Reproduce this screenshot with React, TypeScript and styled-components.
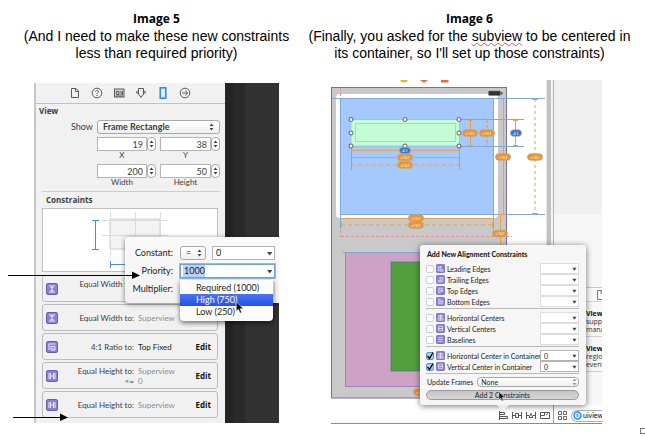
import React from "react";
import styled, { createGlobalStyle, css } from "styled-components";

const ui = `Lato, "Open Sans", "Noto Sans", sans-serif`;

const GlobalStyle = createGlobalStyle`
  *, *::before, *::after { box-sizing: border-box; }
  body { margin: 0; background: #fff; color: #000; font-family: "Liberation Sans", Arial, sans-serif; }
  button, input, select { font: inherit; color: inherit; margin: 0; padding: 0; }
  h2, p, ul, figure { margin: 0; padding: 0; }
`;

/* ---------- document page ---------- */

const Page = styled.main`
  position: relative;
  display: grid;
  grid-template-columns: minmax(0, 6fr) minmax(0, 7fr);
  min-height: 100vh;
  padding: 10px 7px 0 12px;
  overflow: hidden;
`;

const Column = styled.section`
  display: flex;
  flex-direction: column;
`;

const Title = styled.h2`
  font: 700 12px/18px "Open Sans", "Noto Sans", sans-serif;
  text-align: center;
`;

const Caption = styled.p`
  font-size: 14px;
  line-height: 17px;
  text-align: center;
`;

const Misspelt = styled.span`
  text-decoration: underline wavy #f04a4a 1px;
  text-underline-offset: 1px;
  text-decoration-skip-ink: none;
`;

const Shot = styled.figure<{ $top: number; $left: number; $right: number }>`
  position: relative;
  margin: ${(p) => `${p.$top}px ${p.$right}px 0 ${p.$left}px`};
`;

const EndMark = styled.span`
  position: absolute;
  right: -1px;
  bottom: 3px;
  width: 6px;
  height: 6px;
  border: 1px solid #777;
`;

const Pointer = styled.svg<{ $x: number; $y: number }>`
  position: absolute;
  left: ${(p) => p.$x}px;
  top: ${(p) => p.$y}px;
`;

/* ---------- shared controls ---------- */

const Overlap = styled.span`
  display: grid;
  align-items: center;
  & > * { grid-area: 1 / 1; }
  & > svg { justify-self: end; pointer-events: none; }
`;

const TextBox = styled.input<{ $h: number; $focused?: boolean; $faint?: boolean; $right?: boolean }>`
  width: 100%;
  min-width: 0;
  height: ${(p) => p.$h}px;
  padding: 0 3px;
  border: 1px solid ${(p) => (p.$faint ? "#dcdcdc" : "#b4b4b4")};
  border-radius: 0;
  background: #fff;
  outline: none;
  text-align: ${(p) => (p.$right ? "right" : "left")};
  ${(p) =>
    p.$focused &&
    css`
      border-color: #6fa3dc;
      box-shadow: 0 0 0 1px #8fbbec;
      background: linear-gradient(90deg, #fff 2px, #b3d3fb 2px, #b3d3fb 24px, #fff 24px);
    `}
`;

const Popup = styled.select<{ $h: number; $pad: number; $radius: number; $bold?: boolean }>`
  width: 100%;
  height: ${(p) => p.$h}px;
  padding: 0 ${(p) => p.$pad}px;
  appearance: none;
  border: 1px solid #a8a8a8;
  border-radius: ${(p) => p.$radius}px;
  background: linear-gradient(#fff, #f0f0f0);
  outline: none;
  font-weight: ${(p) => (p.$bold ? 700 : 400)};
  line-height: ${(p) => p.$h - 2}px;
`;

const Down = ({ size = 5 }: { size?: number }) => (
  <svg width={size + 3} height={size} viewBox="0 0 8 5">
    <path d="M0 1h5.4L2.7 4.6z" fill="#444" />
  </svg>
);

const UpDown = ({ inset = 6, color = "#444" }: { inset?: number; color?: string }) => (
  <svg width={5 + inset} height="8" viewBox={`0 0 ${5 + inset} 8`}>
    <path d="M0.5 3.1h4L2.5 0.6zM0.5 4.9h4L2.5 7.4z" fill={color} />
  </svg>
);

/* ---------- size inspector ---------- */

const Window = styled.div`
  display: flex;
  height: 340px;
  overflow: hidden;
`;

const Inspector = styled.div`
  flex: 1;
  min-width: 0;
  border-left: 2px solid #c6c6c6;
  background: #f1f1f1;
  font: 8px/10px ${ui};
  color: #3c3c3c;
`;

const Backdrop = styled.div`
  width: 54px;
  background: linear-gradient(90deg, #242424 0 8px, #2a2a2a 8px 20px, #323232 20px);
`;

const Tabs = styled.nav`
  display: flex;
  justify-content: center;
  gap: 8px;
  height: 21px;
  border-bottom: 1px solid #c2c2c2;
`;

const Tab = styled.button`
  display: grid;
  place-items: center;
  width: 14px;
  border: 0;
  background: none;
`;

const Body = styled.div`
  display: flex;
  flex-direction: column;
  padding: 0 7px 0 6px;
`;

const SectionName = styled.h2<{ $inset: number; $h: number }>`
  margin-left: ${(p) => p.$inset}px;
  font: 700 8px/${(p) => p.$h}px "Open Sans", "Noto Sans", sans-serif;
`;

const Geometry = styled.div`
  display: grid;
  grid-template-columns: 51px 59px 60px;
  justify-content: end;
  column-gap: 4px;
  margin: 3px -2px 0 0;
  border-bottom: 1px solid #cdcdcd;
  & > label { text-align: right; line-height: 14px; font-size: 9px; }
`;

const ShowField = styled.div`
  grid-column: 2 / 4;
  margin-bottom: 3px;
  font-size: 9px;
`;

const NumberField = styled.div<{ $start?: boolean }>`
  grid-column-start: ${(p) => (p.$start ? 2 : "auto")};
  display: grid;
  grid-template-columns: 1fr 9px;
  grid-template-rows: 14px 9px;
  font-size: 9px;
  height: 27px;
  & > label { font-size: 8px; line-height: 9px; text-align: center; }
`;

const Stepper = styled.button`
  display: grid;
  place-items: center;
  height: 14px;
  padding: 0;
  border: 1px solid #a8a8a8;
  border-radius: 4px;
  background: #fff;
`;

const Preview = styled.svg`
  width: 100%;
  height: 64px;
  border: 1px solid #c0c0c0;
  background: #fff;
`;

const Cards = styled.ul`
  display: grid;
  gap: 2px;
  margin-top: 3px;
  list-style: none;
`;

const Card = styled.li`
  display: grid;
  grid-template-columns: 12px 72px 1fr auto;
  column-gap: 4px;
  align-items: center;
  height: 27px;
  padding: 0 6px 0 3px;
  border: 1px solid #bcbcbc;
  border-radius: 3px;
  white-space: nowrap;
`;

const CardLabel = styled.span`
  text-align: right;
`;

const CardValue = styled.span<{ $strong?: boolean }>`
  color: ${(p) => (p.$strong ? "#222" : "#8d8d8d")};
`;

const Edit = styled.button`
  border: 0;
  background: none;
  color: #111;
  font-family: "Open Sans", "Noto Sans", sans-serif;
  font-weight: 700;
`;

const Glyph = ({ kind, size = 12 }: { kind: string; size?: number }) => {
  const paths: Record<string, string> = {
    width: "M3 3h6M3 9h6M4.5 4.5h3M4.5 7.5h3M6 3v6",
    height: "M3 3v6M9 3v6M4.5 3v6M7.5 3v6M4.5 6h3",
    ratio: "M3 9V3h6.5M5 9V5.5h4V9zM7 7v2",
    leading: "M3 2.5v7M5 3.5h2v2H5zM5 7.5h4v2H5z",
    trailing: "M9 2.5v7M5 3.5h2v2H5zM3 7.5h4v2H3z",
    top: "M2.5 3h7M3.5 5h2v4h-2zM7 5h2v2H7z",
    bottom: "M2.5 9h7M3.5 3h2v4h-2zM7 5h2v2H7z",
    hcenter: "M6 2v8M3.5 3.5h5v2h-5zM2.5 7.5h7v2h-7z",
    vcenter: "M2.5 6h7M3.5 3h5v6h-5z",
    base: "M3 3.5h6M3 6h6M3 8.5h6",
  };
  return (
    <svg width={size} height={size} viewBox="0 0 12 12">
      <rect x="0.5" y="0.5" width="11" height="11" rx="1.5" fill="#8a81cf" stroke="#675db5" />
      <path d={paths[kind]} fill="none" stroke="#e9e6ff" strokeWidth="1" />
    </svg>
  );
};

const TabIcon = ({ kind }: { kind: string }) => (
  <svg width="12" height="12" viewBox="0 0 12 12" fill="none" stroke="#5a5a5a" strokeWidth="1">
    {kind === "file" && <path d="M2.5 1.5h4.5L9.5 4v6.5h-7zM6.5 1.5V4.5h3" />}
    {kind === "help" && (
      <>
        <circle cx="6" cy="6" r="4.8" />
        <path d="M4.5 4.9c0-2 3-2 3 0 0 1-1.5 1-1.5 2M6 8v1" />
      </>
    )}
    {kind === "identity" && (
      <>
        <rect x="1.5" y="2" width="9.5" height="8" fill="#d4d4d4" />
        <path d="M3.5 4.5h2.5v3H3.5zM8 4v4M9.5 4v4M3 9h7" />
      </>
    )}
    {kind === "attributes" && (
      <path d="M3.5 1.5h5v6H8L6 10.5 4 7.5h-.5zM3.5 3.5L1 5.5l2.5 1M8.5 3.5L11 5.5l-2.5 1" />
    )}
    {kind === "size" && (
      <>
        <rect x="3.2" y="0.8" width="5.6" height="10.4" fill="#dcebff" stroke="#2687ff" strokeWidth="1.5" />
        <path d="M5 3.5h2M5 5.5h2M5 7.5h2" stroke="#fff" />
      </>
    )}
    {kind === "connections" && (
      <>
        <circle cx="6" cy="6" r="4.8" />
        <path d="M3 6h5.5M6.3 3.7L8.7 6 6.3 8.3" />
      </>
    )}
  </svg>
);

const Coordinate = ({ name, value, start }: { name: string; value: string; start?: boolean }) => (
  <NumberField $start={start}>
    <TextBox id={name} $h={14} $right defaultValue={value} />
    <Stepper aria-label={`Step ${name}`}>
      <UpDown inset={0} />
    </Stepper>
    <label htmlFor={name}>{name}</label>
  </NumberField>
);

/* ---------- constraint editor ---------- */

const Editor = styled.form`
  position: absolute;
  top: 154px;
  left: 91px;
  right: 0;
  display: grid;
  grid-template-columns: 48px 1fr;
  grid-auto-rows: 14px;
  gap: 4px 7px;
  height: 66px;
  padding: 9px 4px 0 0;
  border-radius: 4px 0 0 4px;
  background: linear-gradient(#fafafa, #f1f1f1);
  box-shadow: 0 1px 5px rgba(0, 0, 0, 0.5);
  clip-path: inset(-8px 0 -40px -8px);
  font: 9px/14px ${ui};
  color: #222;
  & > label { text-align: right; }
`;

const Pair = styled.div`
  display: grid;
  grid-template-columns: 26px 1fr;
  gap: 6px;
`;

const Menu = styled.ul`
  position: absolute;
  top: 43px;
  left: 55px;
  right: 6px;
  padding: 2px 0 3px;
  border-radius: 0 0 4px 4px;
  background: #fdfdfd;
  box-shadow: 0 2px 5px rgba(0, 0, 0, 0.55);
  list-style: none;
`;

const MenuItem = styled.li<{ $on?: boolean }>`
  padding-left: 16px;
  line-height: 12px;
  white-space: nowrap;
  color: ${(p) => (p.$on ? "#fff" : "#222")};
  background: ${(p) => (p.$on ? "linear-gradient(#4a74f2, #2450e8)" : "none")};
`;

const Cursor = ({ x, y, w }: { x: number; y: number; w: number }) => (
  <Pointer $x={x} $y={y} width={w} height={w + 4} viewBox="0 0 8 12">
    <path d="M1 0.5v9l2-1.8 1.5 3.5 1.5-.7L4.6 7.2h2.9z" fill="#111" stroke="#fff" strokeWidth="0.5" />
  </Pointer>
);

const Arrow = ({ x, y, length }: { x: number; y: number; length: number }) => (
  <Pointer $x={x} $y={y} width={length} height="8" viewBox={`0 0 ${length} 8`}>
    <path d={`M0 4.5H${length - 7}`} stroke="#000" />
    <path d={`M${length - 8} 0.5L${length} 4.5L${length - 8} 8z`} fill="#000" />
  </Pointer>
);

const InspectorShot = () => (
  <Shot $top={21} $left={22} $right={22}>
    <Window>
      <Inspector>
        <Tabs>
          {["file", "help", "identity", "attributes", "size", "connections"].map((k) => (
            <Tab key={k} aria-label={k}>
              <TabIcon kind={k} />
            </Tab>
          ))}
        </Tabs>
        <Body>
          <SectionName $inset={-3} $h={13}>View</SectionName>
          <Geometry>
            <label htmlFor="show">Show</label>
            <ShowField>
              <Overlap>
                <Popup id="show" $h={14} $pad={5} $radius={3} $bold>
                  <option>Frame Rectangle</option>
                </Popup>
                <UpDown />
              </Overlap>
            </ShowField>
            <Coordinate name="X" value="19" start />
            <Coordinate name="Y" value="38" />
            <Coordinate name="Width" value="200" start />
            <Coordinate name="Height" value="50" />
          </Geometry>
          <SectionName $inset={4} $h={16}>Constraints</SectionName>
          <Preview>
            <path d="M67 10h50v30H67z" fill="#f3f3f3" stroke="#cfcfcf" />
            <path d="M67.5 3v44M92.5 3v30M117.5 3v30M59 11.5h66M59 26.5h66" stroke="#dcdcdc" fill="none" />
            <path d="M52.5 11v29M49 11.5h7M49 40.5h7M67.5 52v7M67 55.5h20" stroke="#3d8ff0" fill="none" />
          </Preview>
          <Cards>
            <Card>
              <Glyph kind="width" />
              <CardLabel>Equal Width to:<br />&nbsp;</CardLabel>
            </Card>
            <Card>
              <Glyph kind="width" />
              <CardLabel>Equal Width to:</CardLabel>
              <CardValue>Superview</CardValue>
            </Card>
            <Card>
              <Glyph kind="ratio" />
              <CardLabel>4:1 Ratio to:</CardLabel>
              <CardValue $strong>Top Fixed</CardValue>
              <Edit>Edit</Edit>
            </Card>
            <Card>
              <Glyph kind="height" />
              <CardLabel>Equal Height to:<br />&lt;=</CardLabel>
              <CardValue>Superview<br />0</CardValue>
              <Edit>Edit</Edit>
            </Card>
            <Card>
              <Glyph kind="height" />
              <CardLabel>Equal Height to:</CardLabel>
              <CardValue>Superview</CardValue>
              <Edit>Edit</Edit>
            </Card>
          </Cards>
        </Body>
      </Inspector>
      <Backdrop />
    </Window>
    <Editor>
      <label htmlFor="constant">Constant:</label>
      <Pair>
        <Overlap>
          <Popup aria-label="Relation" $h={14} $pad={5} $radius={3}>
            <option>=</option>
          </Popup>
          <UpDown inset={4} />
        </Overlap>
        <Overlap>
          <TextBox id="constant" $h={14} defaultValue="0" />
          <Down />
        </Overlap>
      </Pair>
      <label htmlFor="priority">Priority:</label>
      <Overlap>
        <TextBox id="priority" $h={14} $focused defaultValue="1000" />
        <Down />
      </Overlap>
      <label htmlFor="multiplier">Multiplier:</label>
      <TextBox id="multiplier" $h={14} $faint />
      <Menu role="listbox" aria-label="Priority">
        <MenuItem role="option">Required (1000)</MenuItem>
        <MenuItem role="option" $on aria-selected>High (750)</MenuItem>
        <MenuItem role="option">Low (250)</MenuItem>
      </Menu>
    </Editor>
    <Cursor x={201} y={218} w={9} />
    <Arrow x={-26} y={188} length={132} />
    <Arrow x={-21} y={330} length={55} />
  </Shot>
);

/* ---------- storyboard canvas ---------- */

const Storyboard = styled.div`
  overflow: hidden;
`;

const Panes = styled.div`
  display: flex;
  height: 325px;
`;

const CanvasArt = styled.svg`
  flex: none;
`;

const Divider = styled.div`
  width: 8px;
  flex: none;
  background: linear-gradient(90deg, #e4e4e4 0 1px, #c2c2c2 1px 5px, #f4f4f4 5px 7px, #b4b4b4 7px);
`;

const Library = styled.aside`
  flex: 1;
  min-width: 0;
  display: flex;
  flex-direction: column;
  justify-content: flex-end;
  background: linear-gradient(#f0f0f0 134px, #f7f7f7 134px);
  font: 7px/8px "Open Sans", "Noto Sans", sans-serif;
  color: #333;
`;

const LibraryTabs = styled.div`
  display: flex;
  justify-content: flex-end;
  height: 15px;
  overflow: hidden;
  border-top: 1px solid #c8c8c8;
  border-bottom: 1px solid #d4d4d4;
  background: #fafafa;
`;

const LibraryItem = styled.div`
  height: 35px;
  padding: 8px 0 0 32px;
  border-bottom: 1px solid #d0d0d0;
  white-space: nowrap;
  overflow: hidden;
  & > b { color: #111; display: block; }
`;

const LibraryRest = styled.div`
  height: 33px;
`;

const StatusBar = styled.footer`
  display: flex;
  justify-content: flex-end;
  align-items: stretch;
  height: 19px;
  border-bottom: 1px solid #8a8a8a;
`;

const Tools = styled.div`
  display: flex;
  align-items: center;
  gap: 4px;
  padding: 3px 3px 0 0;
`;

const Tool = styled.button`
  display: grid;
  border: 0;
  background: none;
`;

const Filter = styled.div`
  display: flex;
  align-items: center;
  gap: 4px;
  width: 49px;
  padding: 3px 0 0 4px;
  border-left: 1px solid #a0a0a0;
`;

const SearchBox = styled.label`
  display: flex;
  align-items: center;
  gap: 1px;
  flex: 1;
  min-width: 0;
  height: 12px;
  padding-left: 1px;
  border: 1px solid #b0b0b0;
  border-right: 0;
  border-radius: 6px 0 0 6px;
  background: #fff;
  & > svg { flex: none; }
`;

const SearchInput = styled.input`
  width: 100%;
  min-width: 0;
  border: 0;
  background: none;
  outline: none;
  font: 7px/9px ${ui};
`;

const Badge = ({ x, y, blue }: { x: number; y: number; blue?: boolean }) => (
  <g>
    <rect x={x - (blue ? 5.5 : 7.5)} y={y - 3.2} width={blue ? 11 : 15} height="6.5" rx="3.2"
      fill={blue ? "#3b78c8" : "#ee9330"} stroke="#b9a68e" strokeWidth="0.8" />
    <text x={x} y={y + 1.6} textAnchor="middle" fontFamily="Open Sans, sans-serif" fontWeight="600"
      fontSize="4" fill={blue ? "#cfe2ff" : "#ffe3bd"}>{blue ? "4:1" : "=162"}</text>
  </g>
);

const handles = [351, 405, 459].flatMap((x) => [119.5, 133, 146].map((y) => [x, y])).filter(
  ([x, y]) => !(x === 405 && y === 133)
);

const Canvas = () => (
  <CanvasArt width="215" height="325" viewBox="331 80 215 325">
    <rect x="331" y="80" width="215" height="325" fill="#fff" />
    <circle cx="404" cy="78.5" r="4" fill="#e5b822" />
    <path d="M420 80h8l-4 3z" fill="#ee6a4a" />
    <rect x="441" y="76" width="7.5" height="6.5" fill="#ef6a3c" />
    <rect x="331.5" y="87.5" width="175" height="310.5" fill="#c9c9c9" stroke="#7b6ca5" />
    <rect x="336" y="94" width="162" height="124" rx="4" fill="#fff" />
    <rect x="341" y="99" width="152" height="115" fill="#a6c9fd" />
    <rect x="488.5" y="91" width="12" height="4.5" rx="1" fill="#333" stroke="#777" strokeWidth="0.5" />
    <rect x="501" y="92" width="1.5" height="2.5" fill="#555" />
    <path d="M340.5 88v10M341 236.500h171M340.5 230v7" fill="none" stroke="#e88f8f" strokeDasharray="3 2" />
    <path d="M332 98.5h213M341 214.5h204M460 119.5h64M460 146.5h64M340.5 99v130M493.5 99v130M351.5 146v24M459.5 146v24"
      fill="none" stroke="#7fa9dc" />
    <rect x="351" y="119.5" width="108.5" height="26.5" fill="#c4fcd6" stroke="#89b6cf" strokeWidth="0.6" />
    <rect x="355.5" y="123.5" width="100" height="18" fill="none" stroke="#c3cbb4" />
    <g fill="none" stroke="#e8a24a">
      <path d="M351 150.5h108M351 157.5h108M470.5 120v26M468 120.5h5M468 145.5h5M515.5 120v26M513 120.5h5M513 145.5h5" />
      <path d="M351 165h108M341 225h152" strokeDasharray="4 3" />
      <path d="M487 120v26" strokeWidth="1.5" strokeDasharray="3 2" />
      <path d="M535 99v115" stroke="#f3c078" strokeWidth="1.5" strokeDasharray="3 3" />
      <path d="M532 99.5h6M532 213.5h6M503.5 99v115L500.5 216v30M341 218.5h152M498 214.5h7M341.5 222v6M492.5 222v6" />
    </g>
    {handles.map(([x, y]) => (
      <rect key={`${x}-${y}`} x={x - 1.8} y={y - 1.8} width="3.6" height="3.6" rx="1" fill="#fff" stroke="#555" />
    ))}
    <Badge x={405} y={150.5} blue />
    <Badge x={405} y={157.5} />
    <Badge x={405} y={165} />
    <Badge x={470} y={133} />
    <Badge x={487} y={133} />
    <Badge x={516} y={133} blue />
    <Badge x={503} y={157} />
    <Badge x={535} y={157} />
    <Badge x={416} y={218} />
    <Badge x={416} y={225} />
    <Badge x={500} y={233.5} />
    <rect x="345.5" y="252.5" width="152" height="134" fill="#cea2c6" stroke="#a27fc0" />
    <path d="M343 252.5h156" stroke="#86a3d2" />
    <rect x="391" y="262" width="62" height="109" fill="#539f3e" stroke="#4a7d8c" strokeWidth="0.8" />
    <Badge x={421} y={392} />
  </CanvasArt>
);

const AlignPopover = styled.form`
  position: absolute;
  top: 165px;
  left: 89px;
  width: 166px;
  padding: 3px 7px 5px 6px;
  border-radius: 3px;
  background: #f6f6f6;
  box-shadow: 0 1px 6px rgba(0, 0, 0, 0.55);
  font: 7px/10px ${ui};
  color: #222;
  &::after {
    content: "";
    position: absolute;
    top: 100%;
    left: 77px;
    border: 6px solid transparent;
    border-top-color: #ececec;
    border-bottom: 0;
  }
`;

const AlignTitle = styled.h2`
  padding-left: 1px;
  font: 900 7px/13px ${ui};
  color: #222;
`;

const AlignGroup = styled.div`
  display: grid;
  grid-auto-rows: 11px;
  padding: 2px 0 1px;
  border-bottom: 1px solid #b9b9b9;
  margin-bottom: 1px;
`;

const AlignRow = styled.div`
  display: grid;
  grid-template-columns: 8px 9px 1fr 39px;
  column-gap: 2px;
  align-items: center;
  white-space: nowrap;
  & > label { min-width: 0; }
`;

const Tick = styled.input`
  appearance: none;
  width: 8px;
  height: 8px;
  border: 1px solid #cfcfcf;
  border-radius: 2px;
  background: #fff;
  &:checked {
    border-color: #5c92cf;
    background: #a9d0f8;
  }
`;

const FramesRow = styled.div`
  display: grid;
  grid-template-columns: auto 1fr;
  column-gap: 4px;
  align-items: center;
  height: 14px;
  padding-left: 1px;
`;

const AddButton = styled.button`
  display: block;
  width: 100%;
  height: 10px;
  margin-top: 1px;
  border: 1px solid #9b9b9b;
  border-radius: 5px;
  background: linear-gradient(#c4c4c4, #d6d6d6);
  line-height: 8px;
`;

const groups: { name: string; kind: string; on?: boolean }[][] = [
  [
    { name: "Leading Edges", kind: "leading" },
    { name: "Trailing Edges", kind: "trailing" },
    { name: "Top Edges", kind: "top" },
    { name: "Bottom Edges", kind: "bottom" },
  ],
  [
    { name: "Horizontal Centers", kind: "hcenter" },
    { name: "Vertical Centers", kind: "vcenter" },
    { name: "Baselines", kind: "base" },
  ],
  [
    { name: "Horizontal Center in Container", kind: "hcenter", on: true },
    { name: "Vertical Center in Container", kind: "vcenter", on: true },
  ],
];

const StoryboardShot = () => (
  <Shot $top={18} $left={30} $right={36}>
    <Storyboard>
      <Panes>
        <Canvas />
        <Divider />
        <Library>
          <LibraryTabs>
            <svg width="6" height="14" viewBox="0 0 6 14">
              <path d="M1.5 2.5h6v9h-6zM5 2.5v3h2" fill="none" stroke="#777" />
            </svg>
          </LibraryTabs>
          <LibraryItem><b>View</b>suppo<br />mana</LibraryItem>
          <LibraryItem><b>View</b>regio<br />event</LibraryItem>
          <LibraryRest />
        </Library>
      </Panes>
      <StatusBar>
        <Tools>
          <Tool aria-label="Align">
            <svg width="10" height="9" viewBox="0 0 10 9" fill="none" stroke="#555"><path d="M1.5 0v9M1.5 1.5h5v2h-5M1.5 5.5h8v2h-8" /></svg>
          </Tool>
          <Tool aria-label="Pin">
            <svg width="10" height="9" viewBox="0 0 10 9" fill="none" stroke="#555"><path d="M0.5 1v7M9.5 1v7M3.5 2.5h3v4h-3zM0 4.5h3M7 4.5h3" /></svg>
          </Tool>
          <Tool aria-label="Resolve">
            <svg width="10" height="9" viewBox="0 0 10 9" fill="none" stroke="#555"><path d="M0.5 1v7M9.5 1v7M3 6.5h4L5 2.5zM0 4.5h3M7 4.5h3" /></svg>
          </Tool>
          <Tool aria-label="Resizing">
            <svg width="10" height="9" viewBox="0 0 10 9" fill="none" stroke="#555"><path d="M0.5 1.5h9v6h-9zM4.5 1.5v3h-4M6 4l2-1.5" /></svg>
          </Tool>
        </Tools>
        <Filter>
          <svg width="9" height="9" viewBox="0 0 9 9" fill="none" stroke="#666">
            <path d="M0.5 0.5h3v3h-3zM5.5 0.5h3v3h-3zM0.5 5.5h3v3h-3zM5.5 5.5h3v3h-3z" />
          </svg>
          <SearchBox>
            <svg width="9" height="9" viewBox="0 0 9 9">
              <circle cx="4.5" cy="4.5" r="3.5" fill="#fff" stroke="#2a86f0" strokeWidth="1.5" />
              <path d="M2.5 4.5h4v1h-4zM3.5 3h2v1h-2z" fill="#2a86f0" />
            </svg>
            <SearchInput aria-label="Filter objects" defaultValue="uiview" />
          </SearchBox>
        </Filter>
      </StatusBar>
    </Storyboard>
    <AlignPopover>
      <AlignTitle>Add New Alignment Constraints</AlignTitle>
      {groups.map((rows, i) => (
        <AlignGroup key={i}>
          {rows.map((r) => (
            <AlignRow key={r.name}>
              <Overlap>
                <Tick type="checkbox" id={r.name} defaultChecked={r.on} />
                {r.on && (
                  <svg width="8" height="8" viewBox="0 0 8 8">
                    <path d="M1.5 4l2 2.5L7 0.5" fill="none" stroke="#111" strokeWidth="1.4" />
                  </svg>
                )}
              </Overlap>
              <Glyph kind={r.kind} size={9} />
              <label htmlFor={r.name}>{r.name}</label>
              <Overlap>
                <TextBox aria-label={`${r.name} offset`} $h={11} $faint={!r.on} defaultValue={r.on ? "0" : ""} />
                <Down size={4} />
              </Overlap>
            </AlignRow>
          ))}
        </AlignGroup>
      ))}
      <FramesRow>
        <label htmlFor="frames">Update Frames</label>
        <Overlap>
          <Popup id="frames" $h={10} $pad={3} $radius={4}>
            <option>None</option>
          </Popup>
          <UpDown inset={2} color="#999" />
        </Overlap>
      </FramesRow>
      <AddButton type="button">Add 2 Constraints</AddButton>
    </AlignPopover>
    <Cursor x={167} y={311} w={7} />
  </Shot>
);

export default function App() {
  return (
    <>
      <GlobalStyle />
      <Page>
        <Column>
          <Title>Image 5</Title>
          <Caption>(And I need to make these new constraints less than required priority)</Caption>
          <InspectorShot />
        </Column>
        <Column>
          <Title>Image 6</Title>
          <Caption>
            (Finally, you asked for the <Misspelt>subview</Misspelt> to be centered in its container, so I'll set up
            those constraints)
          </Caption>
          <StoryboardShot />
        </Column>
        <EndMark />
      </Page>
    </>
  );
}
